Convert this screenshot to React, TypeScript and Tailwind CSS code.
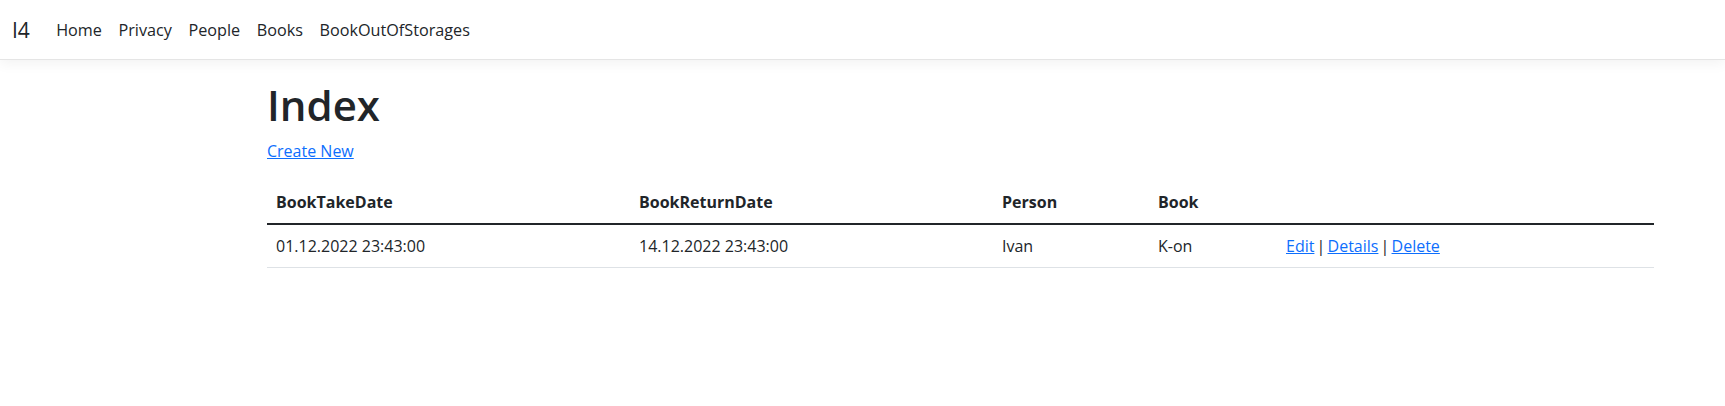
const navLinks = ["Home", "Privacy", "People", "Books", "BookOutOfStorages"];

export default function App() {
  return (
    <div className="min-h-[406px] bg-white font-['Open_Sans','Noto_Sans',sans-serif] text-[16px] text-[#212529]">
      <nav className="flex h-[60px] items-center border-b border-[#e5e5e5] bg-white px-[12px] pt-[2px] shadow-[0_4px_12px_rgba(0,0,0,0.05)]">
        <a className="mr-[18px] text-[21px] leading-none">I4</a>
        <ul className="flex text-[16.2px]">
          {navLinks.map((l) => (
            <li key={l}>
              <a className="px-[8.3px] leading-[24px]">{l}</a>
            </li>
          ))}
        </ul>
      </nav>

      <main className="ml-[267px] w-[1387px] pt-[16px]">
        <h1 className="mb-[7px] pt-[2px] text-[42px] font-semibold leading-[53px]">Index</h1>
        <p className="mb-[17px] leading-[26px]">
          <a href="#" className="text-[#0d6efd] underline">
            Create New
          </a>
        </p>
        <table className="w-full border-collapse text-left">
          <thead>
            <tr className="border-b-2 border-[#212529]">
              <th className="w-[363px] px-[9px] py-[9px] font-bold">BookTakeDate</th>
              <th className="w-[363px] px-[9px] py-[9px] font-bold">BookReturnDate</th>
              <th className="w-[156px] px-[9px] py-[9px] font-bold">Person</th>
              <th className="w-[128px] px-[9px] py-[9px] font-bold">Book</th>
              <th className="px-[9px] py-[9px]"></th>
            </tr>
          </thead>
          <tbody>
            <tr className="border-b border-[#dee2e6]">
              <td className="px-[9px] py-[9px]">01.12.2022 23:43:00</td>
              <td className="px-[9px] py-[9px]">14.12.2022 23:43:00</td>
              <td className="px-[9px] py-[9px]">Ivan</td>
              <td className="px-[9px] py-[9px]">K-on</td>
              <td className="px-[9px] py-[9px] [word-spacing:-2px]">
                <a href="#" className="text-[#0d6efd] underline">Edit</a> |{" "}
                <a href="#" className="text-[#0d6efd] underline">Details</a> |{" "}
                <a href="#" className="text-[#0d6efd] underline">Delete</a>
              </td>
            </tr>
          </tbody>
        </table>
      </main>
    </div>
  );
}
